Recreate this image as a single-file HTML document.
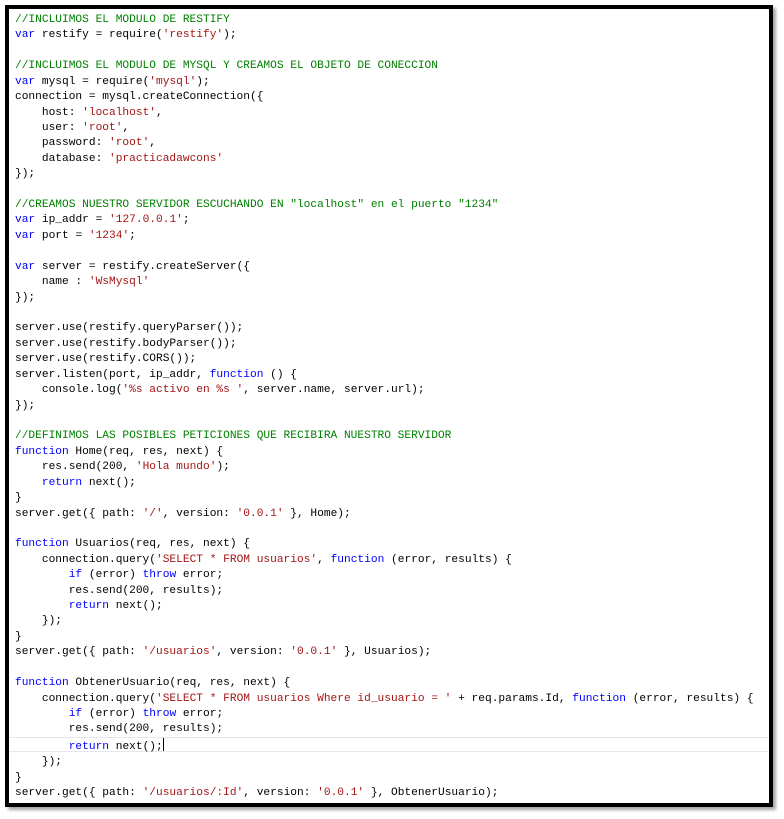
<!DOCTYPE html>
<html><head><meta charset="utf-8"><style>
html,body{margin:0;padding:0;background:#fff;width:784px;height:819px;overflow:hidden}
.frame{position:absolute;left:5px;top:5px;width:760px;height:794px;border:4px solid #000;background:#fff;box-shadow:3px 3px 3px rgba(0,0,0,.35)}
.hl{position:absolute;left:9px;width:759px;top:737px;height:13px;border-top:1px solid #e6e6ee;border-bottom:1px solid #e6e6ee}
pre{position:absolute;left:15px;top:13px;margin:0;font-family:"Liberation Mono",monospace;font-size:11.2px;line-height:15.42px;color:#000}
.c{color:#008000}.k{color:#0000ff}.s{color:#a31515}
.cur{display:inline-block;width:1px;height:13px;background:#000;vertical-align:-2px}
</style></head><body>
<div class="frame"></div>
<div class="hl"></div>
<pre><span class="c">//INCLUIMOS EL MODULO DE RESTIFY</span>
<span class="k">var</span> restify = require(<span class="s">'restify'</span>);

<span class="c">//INCLUIMOS EL MODULO DE MYSQL Y CREAMOS EL OBJETO DE CONECCION</span>
<span class="k">var</span> mysql = require(<span class="s">'mysql'</span>);
connection = mysql.createConnection({
    host: <span class="s">'localhost'</span>,
    user: <span class="s">'root'</span>,
    password: <span class="s">'root'</span>,
    database: <span class="s">'practicadawcons'</span>
});

<span class="c">//CREAMOS NUESTRO SERVIDOR ESCUCHANDO EN "localhost" en el puerto "1234"</span>
<span class="k">var</span> ip_addr = <span class="s">'127.0.0.1'</span>;
<span class="k">var</span> port = <span class="s">'1234'</span>;

<span class="k">var</span> server = restify.createServer({
    name : <span class="s">'WsMysql'</span>
});

server.use(restify.queryParser());
server.use(restify.bodyParser());
server.use(restify.CORS());
server.listen(port, ip_addr, <span class="k">function</span> () {
    console.log(<span class="s">'%s activo en %s '</span>, server.name, server.url);
});

<span class="c">//DEFINIMOS LAS POSIBLES PETICIONES QUE RECIBIRA NUESTRO SERVIDOR</span>
<span class="k">function</span> Home(req, res, next) {
    res.send(200, <span class="s">'Hola mundo'</span>);
    <span class="k">return</span> next();
}
server.get({ path: <span class="s">'/'</span>, version: <span class="s">'0.0.1'</span> }, Home);

<span class="k">function</span> Usuarios(req, res, next) {
    connection.query(<span class="s">'SELECT * FROM usuarios'</span>, <span class="k">function</span> (error, results) {
        <span class="k">if</span> (error) <span class="k">throw</span> error;
        res.send(200, results);
        <span class="k">return</span> next();
    });
}
server.get({ path: <span class="s">'/usuarios'</span>, version: <span class="s">'0.0.1'</span> }, Usuarios);

<span class="k">function</span> ObtenerUsuario(req, res, next) {
    connection.query(<span class="s">'SELECT * FROM usuarios Where id_usuario = '</span> + req.params.Id, <span class="k">function</span> (error, results) {
        <span class="k">if</span> (error) <span class="k">throw</span> error;
        res.send(200, results);
        <span class="k">return</span> next();<span class="cur"></span>
    });
}
server.get({ path: <span class="s">'/usuarios/:Id'</span>, version: <span class="s">'0.0.1'</span> }, ObtenerUsuario);</pre>
</body></html>
